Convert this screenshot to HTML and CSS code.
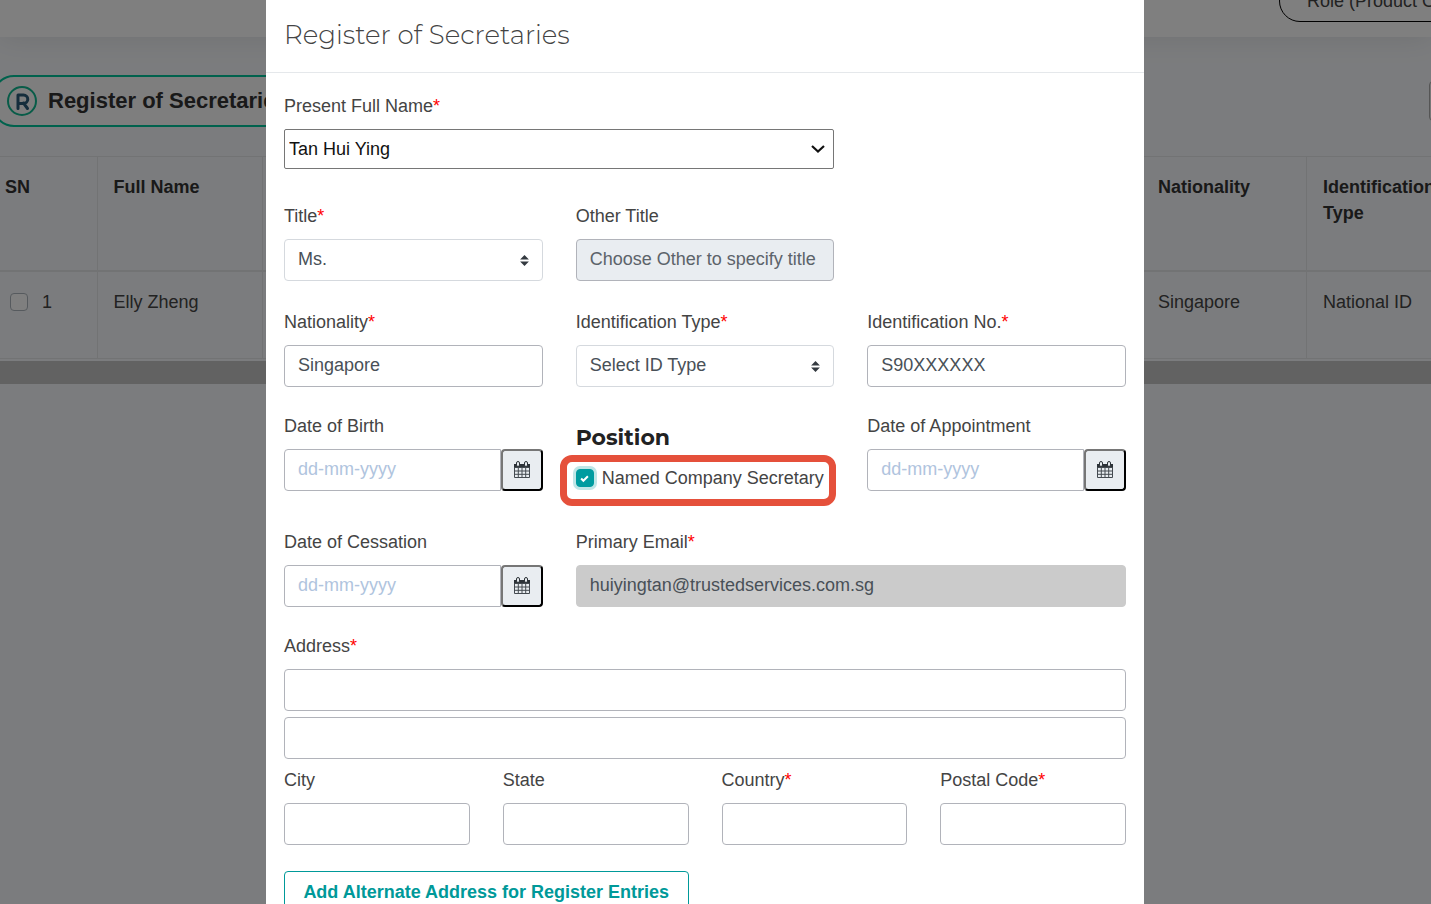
FILE: index.html
```html
<!DOCTYPE html>
<html lang="en">
<head>
    <meta charset="UTF-8">
    <meta name="viewport" content="width=device-width, initial-scale=1.0">
    <title>Register of Secretaries</title>
    <link rel="stylesheet" href="styles.css">
</head>
<body>
    <div class="page">
        <header class="topbar">
            <button type="button" class="role-button">Role (Product Owner)</button>
        </header>

        <div class="toolbar">
            <div class="page-title">
                <svg class="page-icon" viewBox="0 0 30 30" aria-hidden="true">
                    <circle cx="15" cy="15" r="14" fill="none" stroke="#10b890" stroke-width="2"/>
                    <path d="M11 22.500V9h5.500a4 4 0 0 1 0 8.500H11M16.500 17l4 5.500" fill="none" stroke="#2a5a78" stroke-width="3" stroke-linecap="round" stroke-linejoin="round"/>
                </svg>
                <h1>Register of Secretaries</h1>
            </div>
            <button type="button" class="toolbar-button" aria-label="More"></button>
        </div>

        <table class="register">
            <colgroup>
                <col class="col-sn">
                <col class="col-data">
                <col>
                <col class="col-data">
                <col class="col-data">
            </colgroup>
            <thead>
                <tr>
                    <th>SN</th>
                    <th>Full Name</th>
                    <th></th>
                    <th>Nationality</th>
                    <th>Identification Type</th>
                </tr>
            </thead>
            <tbody>
                <tr>
                    <td><label class="row-check"><input type="checkbox" class="check">1</label></td>
                    <td>Elly Zheng</td>
                    <td></td>
                    <td>Singapore</td>
                    <td>National ID</td>
                </tr>
            </tbody>
        </table>
        <div class="scroll-track"></div>
    </div>

    <div class="overlay">
        <div class="modal" role="dialog" aria-labelledby="modalTitle">
            <div class="modal-header">
                <h2 id="modalTitle">Register of Secretaries</h2>
            </div>
            <form class="modal-body">
                <div class="row row-name">
                    <div class="field span-2">
                        <label for="fullName">Present Full Name<span class="required">*</span></label>
                        <select id="fullName" class="name-select">
                            <option>Tan Hui Ying</option>
                        </select>
                    </div>
                </div>

                <div class="row row-title">
                    <div class="field">
                        <label for="title">Title<span class="required">*</span></label>
                        <select id="title" class="control select">
                            <option>Ms.</option>
                        </select>
                    </div>
                    <div class="field">
                        <label for="otherTitle">Other Title</label>
                        <input type="text" id="otherTitle" class="control" placeholder="Choose Other to specify title" disabled>
                    </div>
                </div>

                <div class="row">
                    <div class="field">
                        <label for="nationality">Nationality<span class="required">*</span></label>
                        <input type="text" id="nationality" class="control" value="Singapore">
                    </div>
                    <div class="field">
                        <label for="idType">Identification Type<span class="required">*</span></label>
                        <select id="idType" class="control select">
                            <option>Select ID Type</option>
                        </select>
                    </div>
                    <div class="field">
                        <label for="idNo">Identification No.<span class="required">*</span></label>
                        <input type="text" id="idNo" class="control" value="S90XXXXXX">
                    </div>
                </div>

                <div class="row">
                    <div class="field">
                        <label for="birth">Date of Birth</label>
                        <div class="date-group">
                            <input type="text" id="birth" class="control date" placeholder="dd-mm-yyyy">
                            <button type="button" class="date-button" aria-label="Pick date of birth">
                                <svg class="calendar" viewBox="0 0 18 18"><use href="#calendar"/></svg>
                            </button>
                        </div>
                    </div>
                    <div class="position">
                        <h3>Position</h3>
                        <label class="position-check">
                            <input type="checkbox" class="check check-active" checked>
                            Named Company Secretary
                        </label>
                    </div>
                    <div class="field">
                        <label for="appointment">Date of Appointment</label>
                        <div class="date-group">
                            <input type="text" id="appointment" class="control date" placeholder="dd-mm-yyyy">
                            <button type="button" class="date-button" aria-label="Pick date of appointment">
                                <svg class="calendar" viewBox="0 0 18 18"><use href="#calendar"/></svg>
                            </button>
                        </div>
                    </div>
                </div>

                <div class="row">
                    <div class="field">
                        <label for="cessation">Date of Cessation</label>
                        <div class="date-group">
                            <input type="text" id="cessation" class="control date" placeholder="dd-mm-yyyy">
                            <button type="button" class="date-button" aria-label="Pick date of cessation">
                                <svg class="calendar" viewBox="0 0 18 18"><use href="#calendar"/></svg>
                            </button>
                        </div>
                    </div>
                    <div class="field span-2">
                        <label for="email">Primary Email<span class="required">*</span></label>
                        <input type="email" id="email" class="control email" value="huiyingtan@trustedservices.com.sg" readonly>
                    </div>
                </div>

                <div class="field address">
                    <label for="address1">Address<span class="required">*</span></label>
                    <input type="text" id="address1" class="control">
                    <input type="text" id="address2" class="control" aria-label="Address line 2">
                </div>

                <div class="row row-quarters">
                    <div class="field">
                        <label for="city">City</label>
                        <input type="text" id="city" class="control">
                    </div>
                    <div class="field">
                        <label for="state">State</label>
                        <input type="text" id="state" class="control">
                    </div>
                    <div class="field">
                        <label for="country">Country<span class="required">*</span></label>
                        <input type="text" id="country" class="control">
                    </div>
                    <div class="field">
                        <label for="postal">Postal Code<span class="required">*</span></label>
                        <input type="text" id="postal" class="control">
                    </div>
                </div>

                <div class="row row-quarters">
                    <button type="button" class="add-button span-2">Add Alternate Address for Register Entries</button>
                </div>
            </form>
        </div>
    </div>

    <svg class="symbols" aria-hidden="true">
        <symbol id="calendar" viewBox="0 0 18 18">
            <path d="M1 3h16v4H1z" fill="#2c3238"/>
            <path d="M1.500 6.500h15v10h-15zM5.300 7v9.500M9 7v9.500M12.700 7v9.500M1.500 10h15M1.500 13.300h15" fill="none" stroke="#444a50"/>
            <rect x="3.500" y=".5" width="3" height="5" rx="1.500" fill="#e9edf1" stroke="#2c3238"/>
            <rect x="11.500" y=".5" width="3" height="5" rx="1.500" fill="#e9edf1" stroke="#2c3238"/>
        </symbol>
    </svg>
</body>
</html>
```
FILE: styles.css
```css
* {
    box-sizing: border-box;
}
body {
    margin: 0;
    font-family: Arial, "Liberation Sans", sans-serif;
    font-size: 18px;
    line-height: 26px;
    color: #444;
    background-color: #f7f9fc;
    overflow: hidden;
}
h1, h2, h3 {
    margin: 0;
}
button, input, select {
    font-family: inherit;
    font-size: inherit;
}

/* page behind the modal */
.page {
    min-height: 100vh;
    overflow: hidden;
}
.topbar {
    display: flex;
    justify-content: flex-end;
    align-items: flex-end;
    height: 37px;
    padding-bottom: 15px;
    background-color: #fff;
    box-shadow: 0 0 30px rgba(0, 0, 0, 0.1);
}
.role-button {
    flex: none;
    width: 232px;
    height: 42px;
    margin-right: -80px;
    padding: 0 27px;
    border: 1px solid #000;
    border-radius: 21px;
    background-color: #fff;
    color: #444;
    text-align: left;
    white-space: nowrap;
}
.toolbar {
    display: flex;
    align-items: center;
    justify-content: space-between;
    margin: 38px -38px 29px -8px;
}
.page-title {
    display: flex;
    align-items: center;
    gap: 11px;
    height: 52px;
    padding: 0 24px 0 13px;
    border: 2px solid #00c49a;
    border-radius: 22px;
    background-color: #fcfcfc;
}
.page-icon {
    width: 30px;
    height: 30px;
}
.page-title h1 {
    font-size: 22px;
    color: #333;
}
.toolbar-button {
    width: 40px;
    height: 40px;
    border: 1px solid #aaa;
    border-radius: 4px;
    background-color: #eee;
}
.register {
    width: calc(100% + 41px);
    table-layout: fixed;
    border-collapse: collapse;
}
.col-sn {
    width: 97px;
}
.col-data {
    width: 165px;
}
.register th, .register td {
    padding: 17px 16px;
    border: 1px solid #e4e6e9;
    text-align: left;
    vertical-align: top;
}
.register th {
    height: 114px;
    border-bottom-width: 2px;
    color: #333;
}
.register td {
    height: 88px;
}
.register th:first-child, .register td:first-child {
    padding-left: 5px;
    border-left: none;
}
.row-check {
    display: flex;
    align-items: center;
    gap: 14px;
    padding-left: 5px;
}
.scroll-track {
    height: 23px;
    margin-top: 2px;
    background-color: #c4c4c4;
}

.check {
    appearance: none;
    flex: none;
    width: 18px;
    height: 18px;
    margin: 0;
    border: 1px solid #adb5bd;
    border-radius: 4px;
    background-color: #fff;
}
.check-active {
    border-color: #009ca0;
    background: #009ca0 url("data:image/svg+xml,%3Csvg xmlns='http://www.w3.org/2000/svg' viewBox='0 0 8 8'%3E%3Cpath d='M1 4l2 2 4-4' fill='none' stroke='%23fff' stroke-width='1.8'/%3E%3C/svg%3E") center / 9px 9px no-repeat;
    box-shadow: 0 0 0 3px #bfe6e7;
}

/* modal */
.overlay {
    position: fixed;
    inset: 0;
    padding-right: 21px;
    background-color: rgba(0, 0, 0, 0.5);
    overflow: hidden;
}
.modal {
    max-width: 878px;
    min-height: 100%;
    margin: 0 auto;
    background-color: #fff;
}
.modal-header {
    padding: 16px 18px 18px;
    border-bottom: 1px solid #e5e8eb;
}
.modal-header h2 {
    font-family: Montserrat, Inter, sans-serif;
    font-size: 26px;
    font-weight: 300;
    line-height: 38px;
}
.modal-body {
    padding: 20px 18px;
}
.row {
    display: grid;
    grid-template-columns: repeat(3, 1fr);
    column-gap: 33px;
    margin-bottom: 26px;
}
.row-name {
    margin-bottom: 34px;
}
.row-title {
    margin-bottom: 28px;
}
.row-quarters {
    grid-template-columns: repeat(4, 1fr);
}
.span-2 {
    grid-column: span 2;
}
.field label {
    display: block;
    margin-bottom: 10px;
}
.required {
    color: #f00;
}
.control {
    display: block;
    width: 100%;
    height: 42px;
    padding: 0 13px 2px;
    border: 1px solid #b1b3ba;
    border-radius: 4px;
    background-color: #fff;
    color: #495057;
}
.control::placeholder {
    color: #b0c4de;
    opacity: 1;
}
.control:disabled {
    background-color: #e9edf1;
}
.control:disabled::placeholder {
    color: #5c636a;
}
.select {
    appearance: none;
    border-color: #d5d9de;
    background: #fff url("data:image/svg+xml,%3Csvg xmlns='http://www.w3.org/2000/svg' viewBox='0 0 4 5'%3E%3Cpath fill='%23343a40' d='M2 0L0 2h4zm0 5L0 3h4z'/%3E%3C/svg%3E") right 13px center / 9px 11px no-repeat;
}
.name-select {
    appearance: none;
    display: block;
    width: 100%;
    height: 40px;
    padding: 0 4px;
    border: 1px solid #767676;
    border-radius: 2px;
    color: #111;
    background: #fff url("data:image/svg+xml,%3Csvg xmlns='http://www.w3.org/2000/svg' viewBox='0 0 14 8'%3E%3Cpath d='M1 1l6 5.500 6-5.500' fill='none' stroke='%23111' stroke-width='2.200'/%3E%3C/svg%3E") right 8px center / 14px 8px no-repeat;
}
.email {
    border-color: #cbcbcb;
    background-color: #cbcbcb;
}
.date-group {
    display: flex;
}
.date {
    flex: 1;
    min-width: 0;
    border-radius: 4px 0 0 4px;
}
.date-button {
    display: flex;
    align-items: center;
    justify-content: center;
    width: 42px;
    height: 42px;
    padding: 0;
    border: 2px outset #222;
    border-radius: 4px;
    background-color: #e9edf1;
}
.calendar {
    width: 18px;
    height: 18px;
}
.symbols {
    display: none;
}
.position {
    padding: 11px 0 12px;
}
.position h3 {
    margin-bottom: 13px;
    font-family: Montserrat, Inter, sans-serif;
    font-size: 22px;
    line-height: 28px;
    color: #222;
}
.position-check {
    position: relative;
    display: flex;
    align-items: center;
    gap: 8px;
    white-space: nowrap;
}
/* highlight frame around the secretary option */
.position-check::after {
    content: "";
    position: absolute;
    inset: -10px -2px -15px -16px;
    border: 7px solid #e5503b;
    border-radius: 12px;
}
.address {
    margin-bottom: 8px;
}
.address .control + .control {
    margin-top: 6px;
}
.add-button {
    height: 42px;
    border: 1px solid #009999;
    border-radius: 4px;
    background-color: #fff;
    color: #009999;
    font-weight: bold;
}
```
